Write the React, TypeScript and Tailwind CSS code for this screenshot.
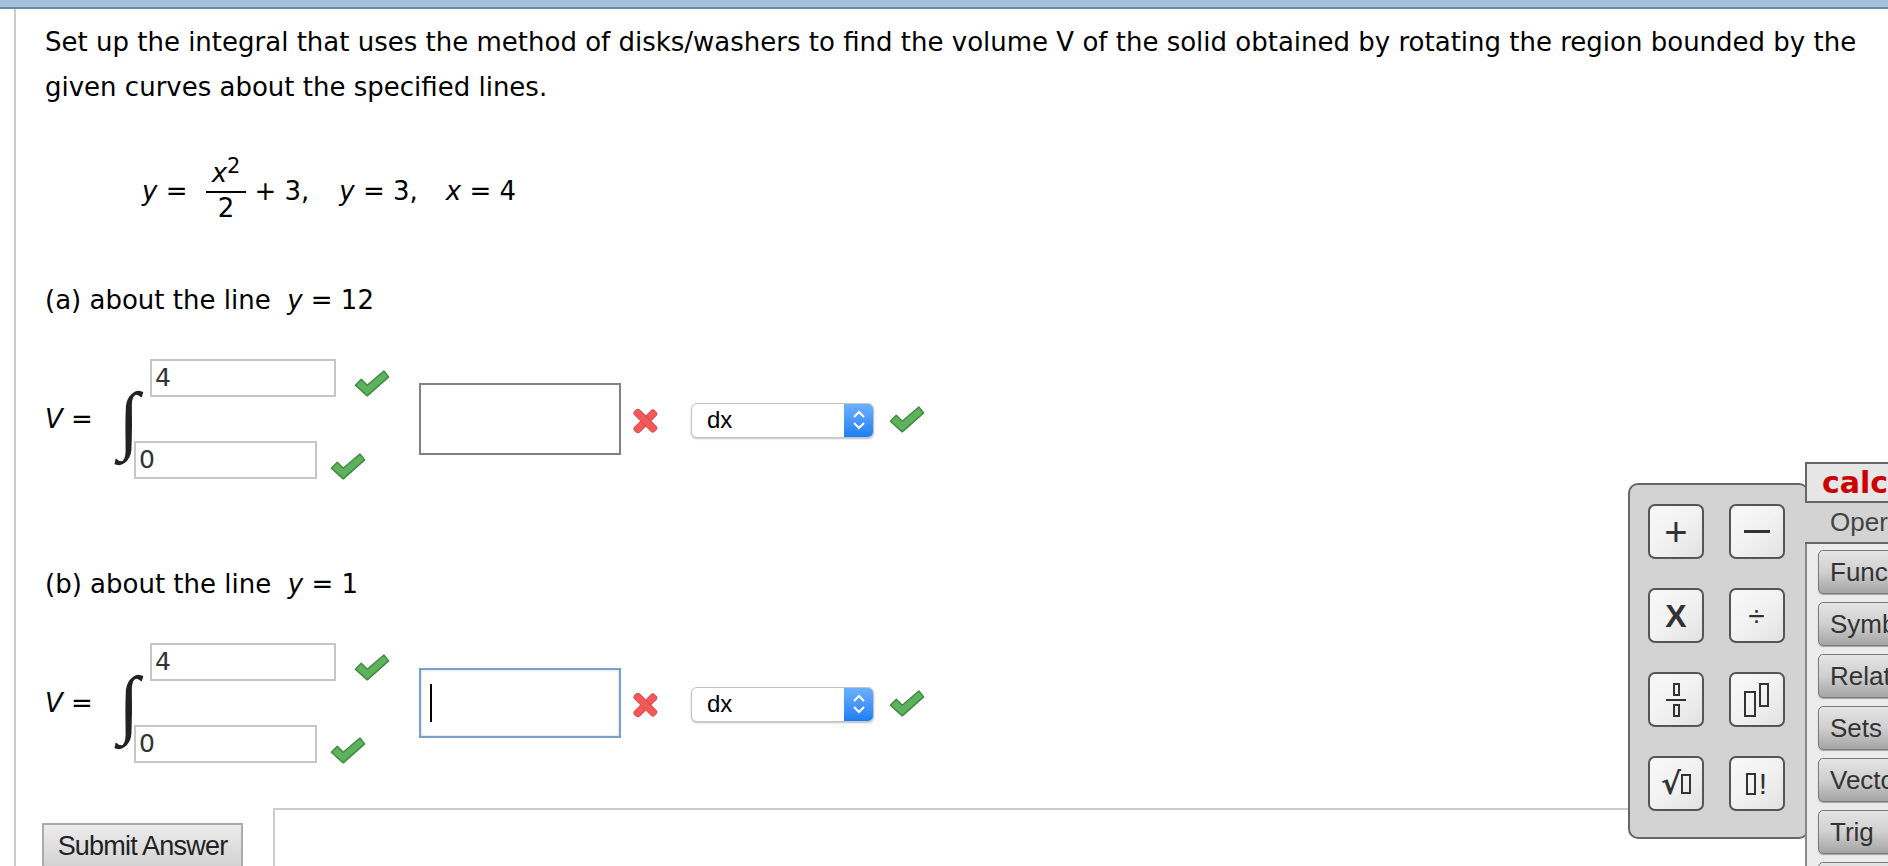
import React from 'react';

const Check: React.FC = () => (
    <svg width="38" height="32" viewBox="0 0 32 26" className="shrink-0">
        <path d="M2 14 L7 9 L12 14 L26 2 L30 7 L12 23 Z" fill="#5db35d" stroke="#3f8a3f" strokeWidth="1.2" strokeLinejoin="round" />
    </svg>
);

const Cross: React.FC = () => (
    <svg width="28" height="28" viewBox="0 0 28 28" className="shrink-0">
        <g fill="#f25a5a" stroke="#e04848" strokeWidth="1">
            <rect x="11" y="0" width="7" height="28" rx="2.5" transform="rotate(45 14 14)" />
            <rect x="11" y="0" width="7" height="28" rx="2.5" transform="rotate(-45 14 14)" />
        </g>
    </svg>
);

const Select: React.FC = () => (
    <div className="flex h-[35px] w-[183px] rounded-[6px] border border-[#c4c4c4] bg-white shadow-[0_1px_2px_rgba(0,0,0,0.25)] overflow-hidden">
        <div className="flex-1 flex items-center pl-[15px] text-[24px] text-black font-['Liberation_Sans',sans-serif]">dx</div>
        <div className="w-[29px] bg-gradient-to-b from-[#6cb0fd] to-[#1b7ff4] flex items-center justify-center">
            <svg width="14" height="24" viewBox="0 0 14 24">
                <polyline points="2,9 7,4 12,9" fill="none" stroke="white" strokeWidth="2" />
                <polyline points="2,15 7,20 12,15" fill="none" stroke="white" strokeWidth="2" />
            </svg>
        </div>
    </div>
);

const Integral: React.FC<{ focused?: boolean }> = ({ focused }) => (
    <div className="flex items-center">
        <div className="w-[60px] text-[26px]"><span className="italic">V</span> =</div>
        <div className="w-[48px] -mr-[19px] h-[70px] flex items-center justify-center text-[76px] leading-none font-['Liberation_Serif',serif] italic text-[#222]">∫</div>
        <div className="flex flex-col gap-[44px] w-[260px]">
            <div className="flex items-center pl-[16px] h-[38px]">
                <div className="w-[186px] h-[38px] border-2 border-[#c6c6c6] px-[3px] text-[25px] leading-[34px] text-[#333]">4</div>
                <div className="ml-[17px] relative top-[6px]"><Check /></div>
            </div>
            <div className="flex items-center h-[38px]">
                <div className="w-[183px] h-[38px] border-2 border-[#c6c6c6] px-[3px] text-[25px] leading-[34px] text-[#333]">0</div>
                <div className="ml-[12px] relative top-[7px]"><Check /></div>
            </div>
        </div>
        {focused ? (
            <div className="ml-[25px] w-[202px] h-[70px] border-2 border-[#7a9fc8] shadow-[inset_0_0_3px_#bcd3ec] flex items-center pl-[9px]">
                <div className="w-[2px] h-[38px] bg-black" />
            </div>
        ) : (
            <div className="ml-[25px] w-[202px] h-[72px] border-2 border-[#808080]" />
        )}
        <div className="ml-[10px] relative top-[2px]"><Cross /></div>
        <div className="ml-[32px] relative top-[1px]"><Select /></div>
        <div className="ml-[14px] relative top-[1px]"><Check /></div>
    </div>
);

const CalcButton: React.FC<{ children: React.ReactNode }> = ({ children }) => (
    <div className="w-[56px] h-[55px] rounded-[7px] border-2 border-[#555] bg-gradient-to-br from-[#f8f8f8] via-[#f2f2f2] to-[#e2e2e2] flex items-center justify-center text-[#333]">
        {children}
    </div>
);

const Tofu: React.FC<{ w: number; h: number }> = ({ w, h }) => (
    <div style={{ width: w, height: h }} className="border-2 border-[#333]" />
);

const tabs = ['Func', 'Symb', 'Relat', 'Sets', 'Vecto', 'Trig', 'Greek'];

const App: React.FC = () => {
    return (
        <div className="relative w-[1888px] h-[866px] overflow-hidden bg-white text-black font-['DejaVu_Sans',sans-serif]">
            <div className="h-[9px] bg-[#a3c1dd] border-b-2 border-[#6d8ba6]" />
            <div className="flex h-[857px]">
                <div className="ml-[14px] w-[2px] bg-[#cccccc]" />
                <div className="flex-1 pl-[29px] pt-[11px]">
                    <p className="text-[26px] leading-[45px] whitespace-nowrap">
                        Set up the integral that uses the method of disks/washers to find the volume V of the solid obtained by rotating the region bounded by the
                        <br />
                        given curves about the specified lines.
                    </p>

                    <div className="mt-[49px] ml-[97px] h-[64px] flex items-center text-[26px] whitespace-pre">
                        <span className="italic">y</span>
                        <span> = </span>
                        <span className="inline-flex flex-col items-center ml-[10px] mr-[8px]">
                            <span className="leading-[31px] px-[6px]"><span className="italic">x</span><span className="relative -top-[9px] text-[21px]">2</span></span>
                            <span className="w-full h-[2px] bg-black" />
                            <span className="leading-[31px]">2</span>
                        </span>
                        <span>+ 3,</span>
                        <span className="ml-[30px] italic">y</span>
                        <span> = 3,</span>
                        <span className="ml-[28px] italic">x</span>
                        <span> = 4</span>
                    </div>

                    <div className="mt-[55px] text-[26px] leading-[45px] whitespace-pre">
                        (a) about the line  <span className="italic">y</span> = 12
                    </div>
                    <div className="mt-[36px]">
                        <Integral />
                    </div>

                    <div className="mt-[83px] text-[26px] leading-[45px] whitespace-pre">
                        (b) about the line  <span className="italic">y</span> = 1
                    </div>
                    <div className="mt-[36px]">
                        <Integral focused />
                    </div>

                    <div className="mt-[45px] flex items-start">
                        <button className="-ml-[3px] mt-[15px] w-[201px] h-[46px] border-2 border-[#ababab] bg-gradient-to-b from-[#ececec] to-[#d2d2d2] text-[27px] text-[#222] font-['Liberation_Sans',sans-serif] tracking-[-0.8px]">
                            Submit Answer
                        </button>
                        <div className="ml-[30px] flex-1 h-[120px] border-t-2 border-l-2 border-[#cccccc]" />
                    </div>
                </div>
            </div>

            {/* floating calculator palette */}
            <div className="absolute left-[1628px] top-[483px] w-[181px] h-[356px] rounded-[10px] border-2 border-[#666] bg-[#d3d3d3] grid grid-cols-2 gap-x-[26px] gap-y-[29px] content-start pt-[19px] pl-[18px] pr-[24px]">
                <CalcButton><span className="text-[40px] leading-none font-['Liberation_Sans',sans-serif] font-light">+</span></CalcButton>
                <CalcButton><div className="w-[26px] h-[3px] bg-[#333]" /></CalcButton>
                <CalcButton><span className="text-[32px] leading-none font-bold font-['Liberation_Sans',sans-serif]">X</span></CalcButton>
                <CalcButton><span className="text-[30px] leading-none font-['Liberation_Sans',sans-serif]">÷</span></CalcButton>
                <CalcButton>
                    <div className="flex flex-col items-center gap-[3px]">
                        <Tofu w={7} h={13} />
                        <div className="w-[20px] h-[2px] bg-[#333]" />
                        <Tofu w={7} h={13} />
                    </div>
                </CalcButton>
                <CalcButton>
                    <div className="flex items-end gap-[3px]">
                        <Tofu w={12} h={26} />
                        <div className="mb-[10px]"><Tofu w={10} h={24} /></div>
                    </div>
                </CalcButton>
                <CalcButton>
                    <div className="flex items-center">
                        <span className="text-[30px] leading-none font-bold font-['DejaVu_Sans',sans-serif]">√</span>
                        <Tofu w={10} h={20} />
                    </div>
                </CalcButton>
                <CalcButton>
                    <div className="flex items-center gap-[3px]">
                        <Tofu w={10} h={22} />
                        <span className="text-[30px] leading-none font-['Liberation_Sans',sans-serif]">!</span>
                    </div>
                </CalcButton>
            </div>

            {/* tab strip */}
            <div className="absolute left-[1805px] top-[462px] right-0 bottom-0 flex flex-col font-['Liberation_Sans',sans-serif]">
                <div className="h-[41px] border-2 border-r-0 border-[#666] bg-[#e6e6e6] pl-[15px] flex items-center text-[30px] font-bold font-['DejaVu_Sans',sans-serif] text-[#cc0000] whitespace-nowrap">calculator</div>
                <div className="h-[44px] border-b-2 border-[#666] bg-[#d3d3d3] pl-[25px] flex items-center text-[26px] text-[#444]">Operations</div>
                <div className="flex-1 border-l-2 border-[#888] bg-[#ececec] pl-[11px] pt-[6px] flex flex-col gap-[8px]">
                    {tabs.map(t => (
                        <div key={t} className="h-[44px] w-[150px] shrink-0 rounded-[5px] border border-[#7a7a7a] bg-gradient-to-b from-[#e4e4e4] via-[#d0d0d0] to-[#a4a4a4] pl-[11px] flex items-center text-[26px] text-[#333] shadow-[0_1px_1px_rgba(0,0,0,0.3)]">
                            {t}
                        </div>
                    ))}
                </div>
            </div>
        </div>
    );
};

export default App;
